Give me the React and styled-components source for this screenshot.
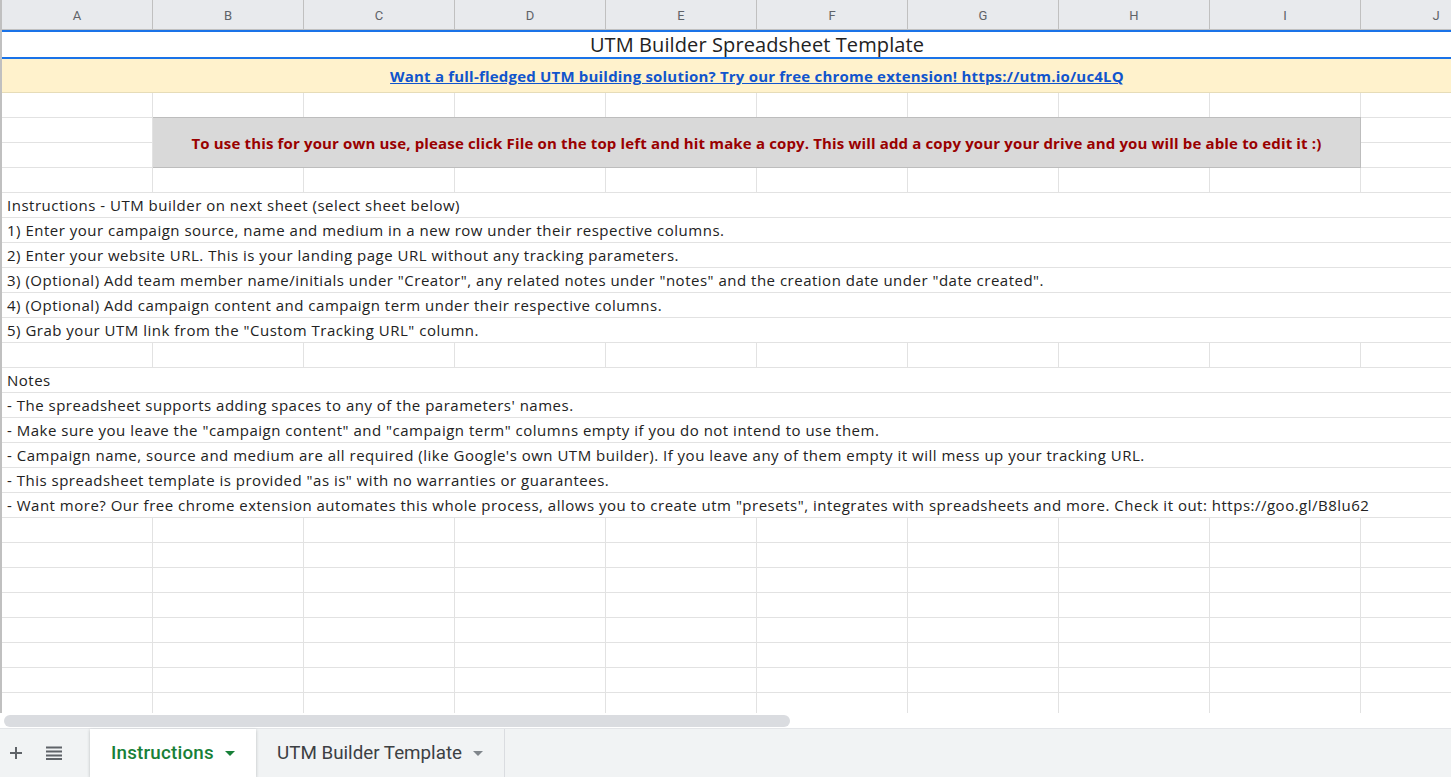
import React from 'react';
import styled, { createGlobalStyle } from 'styled-components';

const GlobalStyle = createGlobalStyle`
  html, body {
    margin: 0;
    padding: 0;
    background: #ffffff;
    overflow: hidden;
  }
  body {
    font-family: 'Open Sans', 'Liberation Sans', sans-serif;
  }
`;

const COLS = ['A', 'B', 'C', 'D', 'E', 'F', 'G', 'H', 'I', 'J'];
// column J runs past the right edge of the window
const TEMPLATE = 'repeat(10, 151px)';

const Page = styled.div`
  width: 1451px;
  height: 777px;
  display: flex;
  flex-direction: column;
  overflow: hidden;
`;

const HeaderRow = styled.div`
  display: grid;
  grid-template-columns: ${TEMPLATE};
  height: 30px;
  flex: none;
  border-left: 2px solid #c0c0c0;
  background: #e8eaed;
  box-sizing: border-box;
  border-bottom: 1px solid #c0c0c0;
`;

const ColHead = styled.div`
  display: flex;
  align-items: center;
  justify-content: center;
  border-right: 1px solid #c0c0c0;
  color: #5f6368;
  font-family: Roboto, 'Liberation Sans', sans-serif;
  font-size: 13px;
  padding-top: 1px;
`;

// the cell area
const Grid = styled.div`
  flex: 1;
  min-height: 0;
  overflow: hidden;
  display: grid;
  grid-template-columns: ${TEMPLATE};
  grid-template-rows: 29px 34px;
  grid-auto-rows: 25px;
  border-left: 2px solid #c0c0c0;
  font-family: 'Open Sans', 'Liberation Sans', sans-serif;
  font-size: 15px;
  letter-spacing: 0.5px;
  color: #222;
`;

const Cell = styled.div`
  box-sizing: border-box;
  border-right: ${(p) => (p.$span ? 'none' : '1px solid #e2e2e2')};
  border-bottom: 1px solid #e2e2e2;
  grid-column: ${(p) => (p.$span ? `span ${p.$span}` : 'auto')};
  display: flex;
  align-items: flex-end;
  padding: 0 0 2px 5px;
  white-space: nowrap;
  overflow: hidden;
`;

const TitleCell = styled.div`
  grid-column: span 10;
  border-top: 2px solid #1a73e8;
  border-bottom: 2px solid #1a73e8;
  display: flex;
  align-items: center;
  justify-content: center;
  font-size: 20px;
  letter-spacing: 0.1px;
  color: #222;
`;

const LinkCell = styled.div`
  grid-column: span 10;
  background: #fff2cc;
  border-bottom: 1px solid #e6dcb8;
  display: flex;
  align-items: center;
  justify-content: center;
  padding-top: 1px;
`;

const Link = styled.a`
  color: #1155cc;
  font-weight: 700;
  font-size: 15px;
  letter-spacing: 0.2px;
  text-decoration: underline;
`;

const NoticeBox = styled.div`
  grid-column: span 8;
  grid-row: span 2;
  background: #d9d9d9;
  border-top: 1px solid #bdbdbd;
  border-bottom: 1px solid #bdbdbd;
  border-right: 1px solid #bdbdbd;
  margin-top: -1px;
  display: flex;
  align-items: center;
  justify-content: center;
  color: #990000;
  font-weight: 700;
  font-size: 15px;
  letter-spacing: 0.15px;
  white-space: nowrap;
`;

const ScrollTrack = styled.div`
  height: 15px;
  flex: none;
  background: #fff;
  padding: 2px 0 1px 4px;
  box-sizing: border-box;
`;

const ScrollThumb = styled.div`
  width: 786px;
  height: 12px;
  border-radius: 6px;
  background: #dadce0;
`;

const TabBar = styled.div`
  flex: none;
  height: 49px;
  box-sizing: border-box;
  display: flex;
  align-items: stretch;
  background: #f1f3f4;
  border-top: 1px solid #e3e5e8;
`;

const IconButton = styled.div`
  width: ${(p) => p.$w}px;
  display: flex;
  align-items: center;
  justify-content: center;
  color: #5f6368;
`;

const Tab = styled.div`
  display: flex;
  align-items: center;
  padding: 0 21px;
  width: ${(p) => p.$w}px;
  box-sizing: border-box;
  font-family: Roboto, 'Liberation Sans', sans-serif;
  font-size: 18.8px;
  font-weight: ${(p) => (p.$active ? 500 : 400)};
  letter-spacing: ${(p) => (p.$active ? '0.2px' : '0')};
  color: ${(p) => (p.$active ? '#188038' : '#3c4043')};
  background: ${(p) => (p.$active ? '#ffffff' : 'transparent')};
  box-shadow: ${(p) => (p.$active ? '0 1px 3px rgba(60,64,67,0.3)' : 'none')};
  border-right: ${(p) => (p.$active ? 'none' : '1px solid #dadce0')};
  justify-content: space-between;
`;

const Caret = ({ color }) => (
  <svg width="10" height="5" viewBox="0 0 10 5">
    <path d="M0 0 L10 0 L5 5 Z" fill={color} />
  </svg>
);

const instructions = [
  'Instructions - UTM builder on next sheet (select sheet below)',
  '1) Enter your campaign source, name and medium in a new row under their respective columns.',
  '2) Enter your website URL. This is your landing page URL without any tracking parameters.',
  '3) (Optional) Add team member name/initials under "Creator", any related notes under "notes" and the creation date under "date created".',
  '4) (Optional) Add campaign content and campaign term under their respective columns.',
  '5) Grab your UTM link from the "Custom Tracking URL" column.',
];

const notes = [
  'Notes',
  "- The spreadsheet supports adding spaces to any of the parameters' names.",
  '- Make sure you leave the "campaign content" and "campaign term" columns empty if you do not intend to use them.',
  "- Campaign name, source and medium are all required (like Google's own UTM builder). If you leave any of them empty it will mess up your tracking URL.",
  '- This spreadsheet template is provided "as is" with no warranties or guarantees.',
  '- Want more? Our free chrome extension automates this whole process, allows you to create utm "presets", integrates with spreadsheets and more. Check it out: https://goo.gl/B8lu62',
];

const EmptyRow = ({ k }) => COLS.map((c) => <Cell key={`${k}-${c}`} />);

export default function App() {
  return (
    <Page>
      <GlobalStyle />
      <HeaderRow>
        {COLS.map((c) => (
          <ColHead key={c}>{c}</ColHead>
        ))}
      </HeaderRow>

      <Grid>
        <TitleCell>UTM Builder Spreadsheet Template</TitleCell>
        <LinkCell>
          <Link>Want a full-fledged UTM building solution? Try our free chrome extension! https://utm.io/uc4LQ</Link>
        </LinkCell>
        <EmptyRow k="r3" />

        <Cell />
        <NoticeBox>
          To use this for your own use, please click File on the top left and hit make a copy. This will add a copy your your drive and you will be able to edit it :)
        </NoticeBox>
        <Cell />
        <Cell />
        <Cell />

        <EmptyRow k="r6" />
        {instructions.map((t) => (
          <Cell key={t} $span={10}>{t}</Cell>
        ))}
        <EmptyRow k="r13" />
        {notes.map((t) => (
          <Cell key={t} $span={10}>{t}</Cell>
        ))}
        {Array.from({ length: 9 }).map((_, i) => (
          <EmptyRow key={i} k={`e${i}`} />
        ))}
      </Grid>

      <ScrollTrack>
        <ScrollThumb />
      </ScrollTrack>

      <TabBar>
        <IconButton $w={32}>
          <svg width="14" height="14" viewBox="0 0 14 14">
            <path d="M7 1 V13 M1 7 H13" stroke="#5f6368" strokeWidth="2" />
          </svg>
        </IconButton>
        <IconButton $w={44}>
          <svg width="16" height="14" viewBox="0 0 16 14">
            <path d="M0 1.5 H16 M0 5.5 H16 M0 9.5 H16 M0 13 H16" stroke="#5f6368" strokeWidth="2" />
          </svg>
        </IconButton>
        <div style={{ width: 14 }} />
        <Tab $active $w={166}>
          Instructions
          <Caret color="#188038" />
        </Tab>
        <Tab $w={249}>
          UTM Builder Template
          <Caret color="#80868b" />
        </Tab>
      </TabBar>
    </Page>
  );
}
